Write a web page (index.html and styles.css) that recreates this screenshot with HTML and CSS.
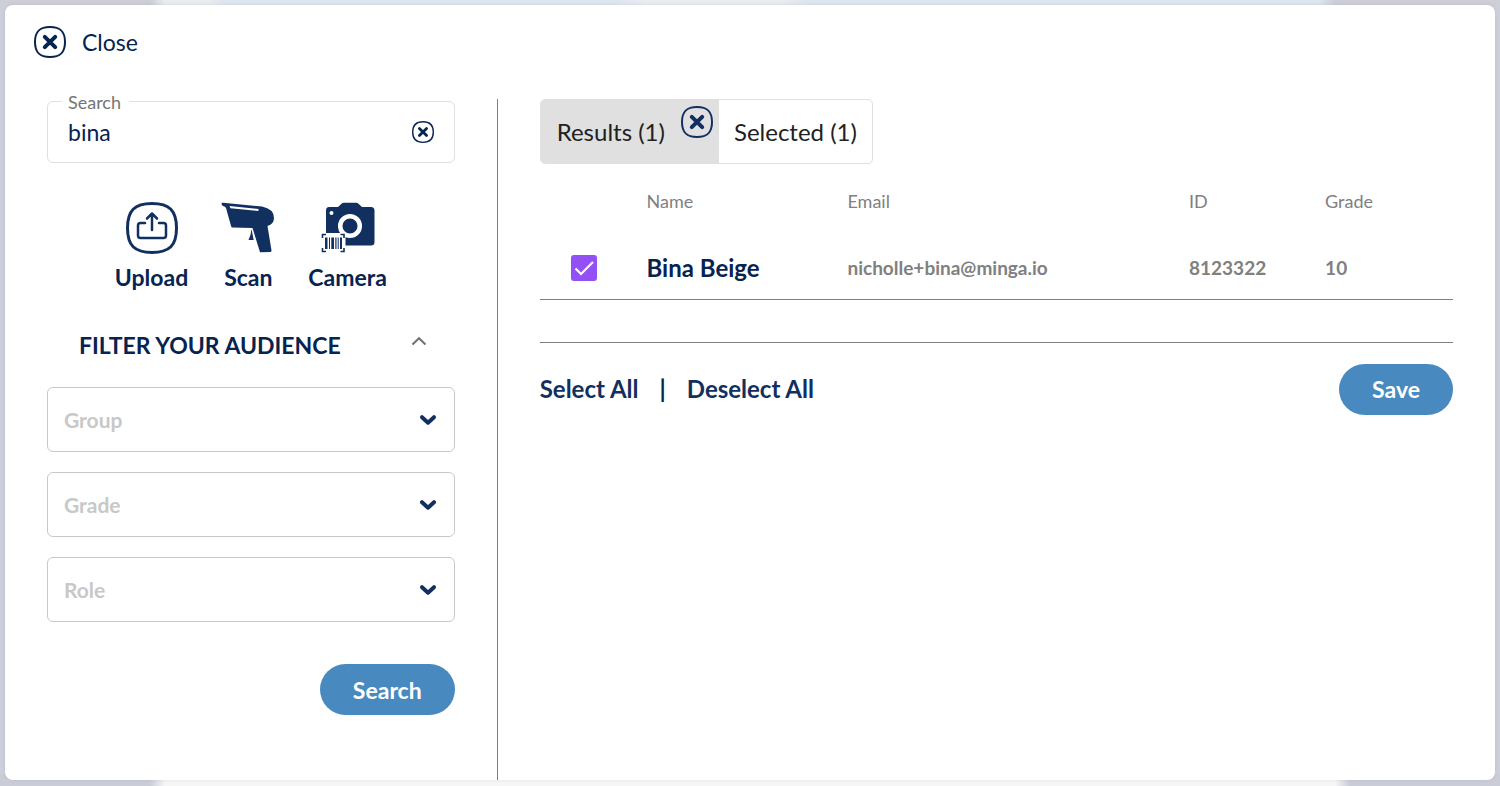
FILE: index.html
```html
<!DOCTYPE html>
<html lang="en">
	<head>
		<meta charset="UTF-8">
		<meta name="viewport" content="width=device-width, initial-scale=1">
		<title>People select</title>
		<link rel="stylesheet" href="styles.css">
	</head>
	<body>
		<svg width="0" height="0" class="sprite" aria-hidden="true">
			<symbol id="close" viewBox="0 0 32 32">
				<path d="M16 1C26.500 1 31 5.500 31 16S26.500 31 16 31 1 26.500 1 16 5.500 1 16 1Z" fill="none" stroke="currentColor" stroke-width="2"/>
				<path d="M10.800 10.800L21.200 21.200M21.200 10.800L10.800 21.200" fill="none" stroke="currentColor" stroke-width="4"  stroke-linecap="round"/>
			</symbol>
			<symbol id="arrow" viewBox="0 0 18 12">
				<path d="M3 3.200L9 8.700L15 3.200" fill="none" stroke="currentColor" stroke-width="4" stroke-linecap="round" stroke-linejoin="round"/>
			</symbol>
		</svg>

		<div class="modal">
			<header class="top">
				<button type="button" class="close-btn">
					<svg class="icon-close" aria-hidden="true"><use href="#close"/></svg>
					<span>Close</span>
				</button>
			</header>

			<div class="content">
				<form class="side">
					<div class="search-field">
						<label for="search">Search</label>
						<input type="text" id="search" value="bina">
						<button type="button" class="icon-btn" aria-label="Clear search">
							<svg class="icon-clear" aria-hidden="true"><use href="#close"/></svg>
						</button>
					</div>

					<div class="tools">
						<button type="button" class="tool">
							<svg width="54" height="54" viewBox="0 0 54 54" fill="none" stroke="currentColor" aria-hidden="true">
								<path d="M27 2.500C44.500 2.500 51.500 9.500 51.500 27S44.500 51.500 27 51.500 2.500 44.500 2.500 27 9.500 2.500 27 2.500Z" stroke-width="3"/>
								<path d="M20 22H15.500Q13 22 13 24.500V34.500Q13 37 15.500 37H38.500Q41 37 41 34.500V24.500Q41 22 38.500 22H34" stroke-width="2.500" stroke-linecap="round"/>
								<path d="M27 29V13M22 17.500L27 12.500L32 17.500" stroke-width="2.500" stroke-linecap="round" stroke-linejoin="round"/>
							</svg>
							<span>Upload</span>
						</button>
						<button type="button" class="tool">
							<svg width="54" height="54" viewBox="0 0 54 54" fill="currentColor" aria-hidden="true">
								<path d="M.5 2Q.8 1.500 2 1.700L41 5.500Q53 8 53 17Q53 23 46.500 25L50.500 49.500Q50.600 51 49 51L39 51.200L31.500 27L11.500 26.500Q10.500 26.500 10.200 25.500L5 7Q4.500 5.500 2 5Q.5 4.500.5 2Z"/>
								<path d="M30.500 28L32.700 39H27.500Q30 34 30.500 28Z"/>
								<path d="M8.500 5L37.500 8V10L9.500 7.200Z" fill="#fff"/>
							</svg>
							<span>Scan</span>
						</button>
						<button type="button" class="tool">
							<svg width="54" height="54" viewBox="0 0 54 54" fill="currentColor" aria-hidden="true">
								<path d="M8 6H17L20.500 2.700Q21.500 1.800 23 1.800H35Q36.500 1.800 37.500 2.700L41 6H50Q53.500 6 53.500 9.500V41Q53.500 44.500 50 44.500H24V33H5V9.500Q5 6 8 6Z"/>
								<circle cx="10.500" cy="12" r="2" fill="#fff"/>
								<circle cx="29" cy="25" r="9.800" stroke="#fff" stroke-width="4.500"/>
								<path d="M0 32H24.500V52H0Z" fill="#fff"/>
								<path d="M1.500 37V33.500H5M19.500 33.500H23V37M23 47V50.500H19.500M5 50.500H1.500V47" fill="none" stroke="currentColor" stroke-width="1.600"/>
								<path d="M4 36.500H6.500V48H4ZM8 36.500H9V48H8ZM10.300 36.500H13V48H10.300ZM14.300 36.500H15.500V48H14.300ZM16.700 36.500H17.700V48H16.700ZM19 36.500H21V48H19Z"/>
							</svg>
							<span>Camera</span>
						</button>
					</div>

					<button type="button" class="filter-title" aria-expanded="true">
						<span>FILTER YOUR AUDIENCE</span>
						<svg width="16" height="18" viewBox="0 0 16 18" aria-hidden="true">
							<path d="M1.500 8.500L8 2.200L14.500 8.500" fill="none" stroke="#757575" stroke-width="2.200"/>
						</svg>
					</button>

					<div class="filters">
						<div class="select-box">
							<select id="group" aria-label="Group"><option>Group</option></select>
							<svg class="icon-arrow" aria-hidden="true"><use href="#arrow"/></svg>
						</div>
						<div class="select-box">
							<select id="grade" aria-label="Grade"><option>Grade</option></select>
							<svg class="icon-arrow" aria-hidden="true"><use href="#arrow"/></svg>
						</div>
						<div class="select-box">
							<select id="role" aria-label="Role"><option>Role</option></select>
							<svg class="icon-arrow" aria-hidden="true"><use href="#arrow"/></svg>
						</div>
					</div>

					<button type="submit" class="btn">Search</button>
				</form>

				<main class="main">
					<div class="tabs">
						<div class="tab active">
							<button type="button" class="tab-btn">Results (1)</button>
							<button type="button" class="icon-btn" aria-label="Clear results">
								<svg class="icon-close" aria-hidden="true"><use href="#close"/></svg>
							</button>
						</div>
						<div class="tab">
							<button type="button" class="tab-btn">Selected (1)</button>
						</div>
					</div>

					<table class="people">
						<thead>
							<tr>
								<th class="col-check"></th>
								<th class="col-name">Name</th>
								<th class="col-email">Email</th>
								<th class="col-id">ID</th>
								<th class="col-grade">Grade</th>
							</tr>
						</thead>
						<tbody>
							<tr>
								<td class="check-cell">
									<span class="check">
										<input type="checkbox" aria-label="Select Bina Beige" checked>
										<svg viewBox="0 0 26 26" aria-hidden="true"><path d="M4.500 13.500L10 19L22 7" fill="none" stroke="#fff" stroke-width="2.200"/></svg>
									</span>
								</td>
								<td class="name">Bina Beige</td>
								<td>nicholle+bina@minga.io</td>
								<td>8123322</td>
								<td>10</td>
							</tr>
						</tbody>
					</table>

					<div class="actions">
						<div class="select-links">
							<button type="button">Select All</button>
							<span>|</span>
							<button type="button">Deselect All</button>
						</div>
						<button type="button" class="btn">Save</button>
					</div>
				</main>
			</div>
		</div>
	</body>
</html>
```
FILE: styles.css
```css
*{margin: 0;padding: 0;box-sizing: border-box;}
body{
	min-height: 100vh;
	display: flex;
	padding: 5px 5px 6px;
	font-family: Lato, "Open Sans", sans-serif;
	font-size: 23px;
	line-height: 28px;
	color: #07234f;
	background:
		linear-gradient(90deg, #cdced6 10%, #e8edef 11%, #e8edef 14%, #dde5ef 15%, #dde5ef 41%, #e8edef 43%, #e8edef 52%, #dde5ef 54%, #dde5ef 88%, #cdced6 89%) top / 100% 6px no-repeat,
		linear-gradient(90deg, #cacdd8 10%, #f6f6f6 11%, #f6f6f6 89%, #cacdd8 90%) bottom / 100% 12px no-repeat,
		#cdd0db;
}
button, input, select{font: inherit;color: inherit;background: none;border: none;}
button{cursor: pointer;}
svg{display: block;flex-shrink: 0;}
.sprite{position: absolute;}

.modal{flex: 1;display: flex;flex-direction: column;background: #fff;border-radius: 8px;box-shadow: 0 0 4px rgba(0,0,0,0.08);}
.top{padding: 21px 29px 41px;}
.close-btn{display: flex;align-items: center;gap: 16px;}
.icon-close{width: 32px;height: 32px;}
.icon-clear{width: 22px;height: 22px;}
.icon-arrow{width: 18px;height: 12px;}
.icon-btn{flex-shrink: 0;}

.content{flex: 1;display: flex;}
.side{width: 33%;padding: 2px 42px 24px;display: flex;flex-direction: column;}
.main{flex: 1;min-width: 0;padding: 0 42px 24px;border-left: 1px solid #808080;}

/* search */
.search-field{position: relative;display: flex;align-items: center;height: 62px;padding: 0 20px;border: 1px solid #e0e0e0;border-radius: 6px;}
.search-field label{position: absolute;top: -12px;left: 14px;padding: 0 8px 0 6px;font-size: 18px;line-height: 24px;color: #757575;background: #fff;}
.search-field input{flex: 1;min-width: 0;outline: none;}

.tools{display: flex;justify-content: center;gap: 33px;margin-top: 38px;}
.tool{display: flex;flex-direction: column;align-items: center;gap: 8px;font-weight: 700;}
.tool svg{color: #11305f;}

.filter-title{display: flex;justify-content: space-between;align-items: center;margin-top: 40px;padding: 0 28px 0 32px;font-weight: 700;}
.filters{display: flex;flex-direction: column;gap: 20px;margin-top: 28px;}
.select-box{position: relative;}
.select-box select{width: 100%;height: 65px;padding: 0 48px 0 16px;border: 1px solid #c8c8c8;border-radius: 6px;appearance: none;font-size: 21px;font-weight: 700;color: #c8c8c8;}
.select-box svg{position: absolute;right: 18px;top: 27px;color: #11305f;pointer-events: none;}

.btn{height: 51px;padding: 0 33px;border-radius: 26px;background: #488abf;color: #fff;font-weight: 700;}
.side .btn{align-self: flex-end;margin-top: 42px;}

/* results */
.tabs{display: inline-flex;height: 65px;border: 1px solid #e0e0e0;border-radius: 5px;overflow: hidden;font-size: 24px;color: #212121;vertical-align: top;}
.tab{display: flex;align-items: flex-start;}
.tab-btn{height: 100%;padding: 0 15px;}
.tab.active{padding-right: 6px;background: #e0e0e0;}
.tab.active .tab-btn{padding: 0 16px;}
.tab .icon-btn{margin-top: 6px;color: #11305f;}

.people{width: 100%;table-layout: fixed;border-collapse: collapse;font-size: 19px;color: #808080;text-align: left;}
.people th{height: 73px;font-size: 18px;font-weight: 400;}
.people td{height: 62px;border-bottom: 1px solid #808080;font-weight: 700;}
.people .name{font-size: 24px;color: #07234f;}
.people .check-cell{padding-left: 31px;}
.col-check{width: 11.7%;}
.col-name{width: 22%;}
.col-email{width: 37.4%;}
.col-id{width: 14.9%;}
.check{position: relative;display: block;width: 26px;height: 26px;}
.check input{display: block;width: 26px;height: 26px;appearance: none;background: #9350f5;border-radius: 3px;}
.check svg{position: absolute;top: 0;left: 0;width: 26px;height: 26px;pointer-events: none;}

.actions{display: flex;justify-content: space-between;align-items: center;margin-top: 42px;padding-top: 21px;border-top: 1px solid #808080;}
.select-links{display: flex;gap: 21px;font-size: 24px;font-weight: 700;}
.select-links button{color: #11305f;}
```
